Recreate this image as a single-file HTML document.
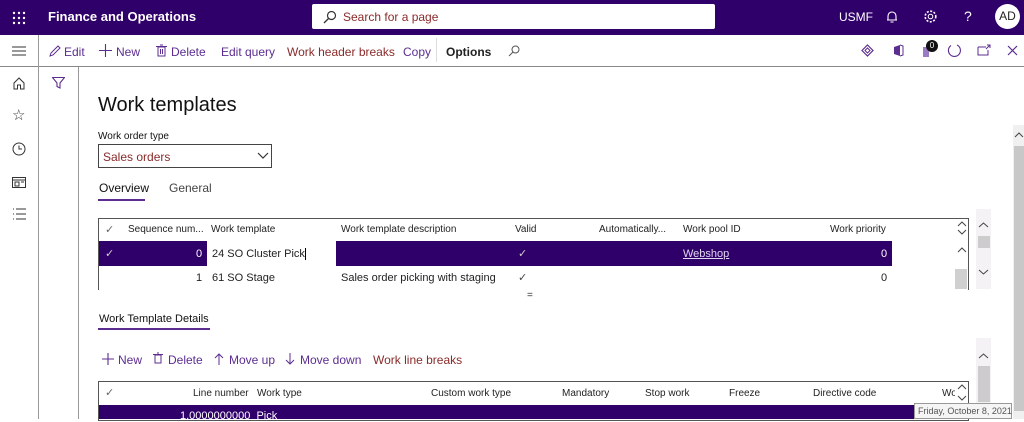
<!DOCTYPE html>
<html><head><style>
*{box-sizing:border-box;margin:0;padding:0}
body{width:1024px;height:419px;overflow:hidden;background:#fff;font-family:"Liberation Sans",sans-serif;font-size:11px;color:#222;position:relative}
.a{position:absolute;white-space:nowrap}
.top{left:0;top:0;width:1024px;height:35px;background:#30006a}
.pur{color:#5c2d91}
.red{color:#8a2a2a}
svg{position:absolute}
</style></head><body>
<div class="a top"></div>
<svg style="left:12px;top:11px" width="14" height="14"><g fill="#fff"><circle cx="2" cy="2" r="1.2"/><circle cx="7" cy="2" r="1.2"/><circle cx="12" cy="2" r="1.2"/><circle cx="2" cy="7" r="1.2"/><circle cx="7" cy="7" r="1.2"/><circle cx="12" cy="7" r="1.2"/><circle cx="2" cy="12" r="1.2"/><circle cx="7" cy="12" r="1.2"/><circle cx="12" cy="12" r="1.2"/></g></svg>
<div class="a" style="left:48px;top:9px;color:#fff;font-size:13px;font-weight:bold">Finance and Operations</div>
<div class="a" style="left:312px;top:4px;width:403px;height:25px;background:#fff;border-radius:2px"></div>
<svg style="left:323px;top:10px" width="14" height="14"><circle cx="8.5" cy="5.5" r="4" fill="none" stroke="#333" stroke-width="1.2"/><path d="M5.5 8.5L1 13" stroke="#333" stroke-width="1.3"/></svg>
<div class="a red" style="left:343px;top:10px;font-size:12px">Search for a page</div>
<div class="a" style="left:839px;top:10px;color:#fff;font-size:12px">USMF</div>
<svg style="left:885px;top:10px" width="14" height="14"><path d="M3 10V6a4 4 0 0 1 8 0v4H3zM2 10h10M5.5 12h3" fill="none" stroke="#fff" stroke-width="1.1"/></svg>
<svg style="left:923px;top:9px" width="15" height="15"><circle cx="7.5" cy="7.5" r="2.3" fill="none" stroke="#fff"/><circle cx="7.5" cy="7.5" r="5.3" fill="none" stroke="#fff" stroke-dasharray="2 1.5" stroke-width="1.6"/></svg>
<div class="a" style="left:964px;top:8px;color:#fff;font-size:14px">?</div>
<div class="a" style="left:995px;top:4px;width:25px;height:25px;border-radius:50%;background:#fff;color:#222;font-size:12px;text-align:center;line-height:25px">AD</div>
<div class="a" style="left:0;top:66px;width:1024px;height:1px;background:#888"></div>
<div class="a" style="left:38px;top:35px;width:1px;height:384px;background:#999"></div>
<div class="a" style="left:78px;top:67px;width:1px;height:352px;background:#999"></div>
<svg style="left:12px;top:46px" width="14" height="10"><path d="M0 1h14M0 5h14M0 9h14" stroke="#333" stroke-width="1.1"/></svg>
<svg style="left:49px;top:45px" width="12" height="12"><path d="M1 11l1-3 7-7 2 2-7 7z" fill="none" stroke="#5c2d91"/></svg>
<div class="a pur" style="left:64px;top:45px;font-size:12px">Edit</div>
<svg style="left:99px;top:44px" width="13" height="13"><path d="M6.5 0v13M0 6.5h13" stroke="#5c2d91" stroke-width="1.1"/></svg>
<div class="a pur" style="left:116px;top:45px;font-size:12px">New</div>
<svg style="left:156px;top:44px" width="11" height="13"><rect x="2" y="3" width="7" height="9" fill="none" stroke="#5c2d91"/><path d="M0 2.5h11M4 1h3M4.5 5v5M6.5 5v5" stroke="#5c2d91"/></svg>
<div class="a pur" style="left:171px;top:45px;font-size:12px">Delete</div>
<div class="a pur" style="left:221px;top:45px;font-size:12px">Edit query</div>
<div class="a red" style="left:287px;top:45px;font-size:12px">Work header breaks</div>
<div class="a pur" style="left:403px;top:45px;font-size:12px">Copy</div>
<div class="a" style="left:436px;top:38px;width:1px;height:24px;background:#ddd"></div>
<div class="a" style="left:446px;top:45px;font-size:12px;font-weight:bold;color:#222">Options</div>
<svg style="left:508px;top:45px" width="12" height="12"><circle cx="7.5" cy="4.5" r="3.5" fill="none" stroke="#555"/><path d="M5 7L1 11" stroke="#555"/></svg>
<svg style="left:861px;top:44px" width="13" height="13"><path d="M6.5 1l5.5 5.5-5.5 5.5L1 6.5z" fill="none" stroke="#5c2d91" stroke-width="1.2"/><path d="M6.5 4l2.5 2.5-2.5 2.5L4 6.5z" fill="none" stroke="#5c2d91"/></svg>
<svg style="left:893px;top:44px" width="11" height="13"><path d="M1 3l6-2v11l-6-2z" fill="#5c2d91"/><path d="M7 1l3 1v9l-3 1" fill="none" stroke="#5c2d91"/></svg>
<svg style="left:921px;top:44px" width="10" height="14"><path d="M2 3h6v10H2z" fill="#9b7cc4"/></svg>
<div class="a" style="left:926px;top:40px;width:12px;height:12px;border-radius:50%;background:#111;color:#fff;font-size:8px;text-align:center;line-height:12px">0</div>
<svg style="left:947px;top:43px" width="15" height="15"><path d="M4 2.5A6 6 0 1 0 10 2" fill="none" stroke="#5c2d91" stroke-width="1.1"/></svg>
<svg style="left:977px;top:44px" width="14" height="12"><path d="M1 3h8M1 3v8h10V6" fill="none" stroke="#5c2d91"/><path d="M9 5l4-4M10 1h3v3" fill="none" stroke="#5c2d91"/></svg>
<svg style="left:1007px;top:45px" width="11" height="11"><path d="M1 1l9 9M10 1l-9 9" stroke="#5c2d91" stroke-width="1.2"/></svg>
<svg style="left:12px;top:76px" width="14" height="14"><path d="M2 7l5-5 5 5v6H8.5V9h-3v4H2z" fill="none" stroke="#333"/></svg>
<div class="a" style="left:12px;top:106px;font-size:15px;color:#333">☆</div>
<svg style="left:12px;top:142px" width="14" height="14"><circle cx="7" cy="7" r="6" fill="none" stroke="#333"/><path d="M7 3.5V7h3" fill="none" stroke="#333"/></svg>
<svg style="left:12px;top:177px" width="14" height="11"><rect x=".5" y=".5" width="13" height="10" fill="none" stroke="#333"/><path d="M.5 3h13M3 5h4v4H3zM9 5h3" fill="none" stroke="#333"/></svg>
<svg style="left:12px;top:208px" width="14" height="12"><path d="M1 1h1M1 6h1M1 11h1M4 1h10M4 6h10M4 11h10" stroke="#333"/></svg>
<svg style="left:52px;top:77px" width="13" height="12"><path d="M.5 .5h12L8 6v5l-3-1.5V6z" fill="none" stroke="#5c2d91" stroke-width="1.1"/></svg>
<div class="a" style="left:98px;top:94px;font-size:20px;color:#111">Work templates</div>
<div class="a" style="left:98px;top:131px;font-size:10px;color:#111">Work order type</div>
<div class="a" style="left:98px;top:144px;width:174px;height:24px;border:1px solid #444"></div>
<div class="a red" style="left:103px;top:150px;font-size:12px">Sales orders</div>
<svg style="left:257px;top:152px" width="12" height="8"><path d="M1 1l5 5 5-5" fill="none" stroke="#333" stroke-width="1.2"/></svg>
<div class="a" style="left:99px;top:181px;font-size:12px;color:#111">Overview</div>
<div class="a" style="left:98px;top:199px;width:47px;height:2px;background:#5c2d91"></div>
<div class="a" style="left:169px;top:181px;font-size:12px;color:#444">General</div>
<div class="a" style="left:98px;top:218px;width:871px;height:72px;border:1px solid #555;border-bottom:none"></div>
<div class="a" style="left:99px;top:241px;width:793px;height:25px;background:#30006a"></div>
<div class="a" style="left:207px;top:241px;width:129px;height:25px;background:#fff"></div>
<div class="a" style="left:105px;top:223px;color:#666">✓</div>
<div class="a" style="left:128px;top:224px;font-size:10px">Sequence num...</div>
<div class="a" style="left:211px;top:224px;font-size:10px">Work template</div>
<div class="a" style="left:341px;top:224px;font-size:10px">Work template description</div>
<div class="a" style="left:515px;top:224px;font-size:10px">Valid</div>
<div class="a" style="left:599px;top:224px;font-size:10px">Automatically...</div>
<div class="a" style="left:683px;top:224px;font-size:10px">Work pool ID</div>
<div class="a" style="left:830px;top:224px;font-size:10px">Work priority</div>
<div class="a" style="left:105px;top:247px;color:#ccc">✓</div>
<div class="a" style="left:196px;top:248px;color:#fff">0</div>
<div class="a" style="left:212px;top:248px">24 SO Cluster Pic<span style="border-right:1px solid #000">k</span></div>
<div class="a" style="left:518px;top:247px;color:#ccc">✓</div>
<div class="a" style="left:683px;top:248px;color:#e0d6f0;text-decoration:underline">Webshop</div>
<div class="a" style="left:881px;top:248px;color:#fff">0</div>
<div class="a" style="left:196px;top:272px">1</div>
<div class="a" style="left:212px;top:272px">61 SO Stage</div>
<div class="a" style="left:341px;top:272px">Sales order picking with staging</div>
<div class="a" style="left:518px;top:271px;color:#444">✓</div>
<div class="a" style="left:881px;top:272px">0</div>
<div class="a" style="left:955px;top:219px;width:13px;height:71px;background:#fff"></div>
<div class="a" style="left:955px;top:269px;width:12px;height:20px;background:#d0d0d0"></div>
<svg style="left:956px;top:220px" width="11" height="70"><path d="M2 6l4-4 4 4M2 10l4 4 4-4M2 32l4-4 4 4" fill="none" stroke="#444"/></svg>
<div class="a" style="left:976px;top:209px;width:15px;height:80px;background:#f5f2f6"></div>
<div class="a" style="left:978px;top:236px;width:12px;height:12px;background:#ccc"></div>
<svg style="left:977px;top:220px" width="13" height="60"><path d="M2 7l4.5-4 4.5 4M2 50l4.5 4 4.5-4" fill="none" stroke="#444"/></svg>
<div class="a" style="left:527px;top:290px;font-size:10px;color:#333">=</div>
<div class="a" style="left:99px;top:313px;font-size:11px;color:#111">Work Template Details</div>
<div class="a" style="left:98px;top:328px;width:112px;height:2px;background:#5c2d91"></div>
<svg style="left:102px;top:353px" width="12" height="12"><path d="M6 0v12M0 6h12" stroke="#5c2d91" stroke-width="1.1"/></svg>
<div class="a pur" style="left:118px;top:353px;font-size:12px">New</div>
<svg style="left:153px;top:352px" width="10" height="12"><rect x="2" y="3" width="6" height="8" fill="none" stroke="#5c2d91"/><path d="M0 2.5h10M4 1h2" stroke="#5c2d91"/></svg>
<div class="a pur" style="left:168px;top:353px;font-size:12px">Delete</div>
<svg style="left:214px;top:353px" width="10" height="12"><path d="M5 12V1M1 5l4-4 4 4" fill="none" stroke="#5c2d91"/></svg>
<div class="a pur" style="left:229px;top:353px;font-size:12px">Move up</div>
<svg style="left:285px;top:353px" width="10" height="12"><path d="M5 0v11M1 7l4 4 4-4" fill="none" stroke="#5c2d91"/></svg>
<div class="a pur" style="left:300px;top:353px;font-size:12px">Move down</div>
<div class="a red" style="left:373px;top:353px;font-size:12px">Work line breaks</div>
<div class="a" style="left:98px;top:381px;width:871px;height:40px;border:1px solid #555"></div>
<div class="a" style="left:99px;top:405px;width:870px;height:14px;background:#30006a"></div>
<div class="a" style="left:105px;top:386px;color:#666">✓</div>
<div class="a" style="left:193px;top:388px;font-size:10px">Line number</div>
<div class="a" style="left:257px;top:388px;font-size:10px">Work type</div>
<div class="a" style="left:431px;top:388px;font-size:10px">Custom work type</div>
<div class="a" style="left:562px;top:388px;font-size:10px">Mandatory</div>
<div class="a" style="left:645px;top:388px;font-size:10px">Stop work</div>
<div class="a" style="left:729px;top:388px;font-size:10px">Freeze</div>
<div class="a" style="left:813px;top:388px;font-size:10px">Directive code</div>
<div class="a" style="left:942px;top:388px;font-size:10px">Wo</div>
<div class="a" style="left:180px;top:410px;color:#fff">1.0000000000&nbsp;&nbsp;Pick</div>
<div class="a" style="left:955px;top:382px;width:13px;height:22px;background:#fff"></div>
<svg style="left:956px;top:383px" width="11" height="20"><path d="M2 6l4-4 4 4M2 13l4 4 4-4" fill="none" stroke="#444"/></svg>
<div class="a" style="left:976px;top:338px;width:15px;height:81px;background:#f5f2f6"></div>
<div class="a" style="left:978px;top:366px;width:12px;height:36px;background:#ccc"></div>
<svg style="left:977px;top:350px" width="13" height="12"><path d="M2 8l4.5-4 4.5 4" fill="none" stroke="#444"/></svg>
<div class="a" style="left:1013px;top:125px;width:11px;height:294px;background:#f0f0f0"></div>
<div class="a" style="left:1014px;top:146px;width:10px;height:265px;background:#c8c8c8"></div>
<svg style="left:1014px;top:130px" width="10" height="10"><path d="M1 7l4-4 4 4" fill="none" stroke="#444"/></svg>
<div class="a" style="left:914px;top:403px;width:98px;height:16px;background:#f5f5f5;border:1px solid #999;font-size:9px;color:#555;padding:2px 3px">Friday, October 8, 2021</div>
</body></html>
